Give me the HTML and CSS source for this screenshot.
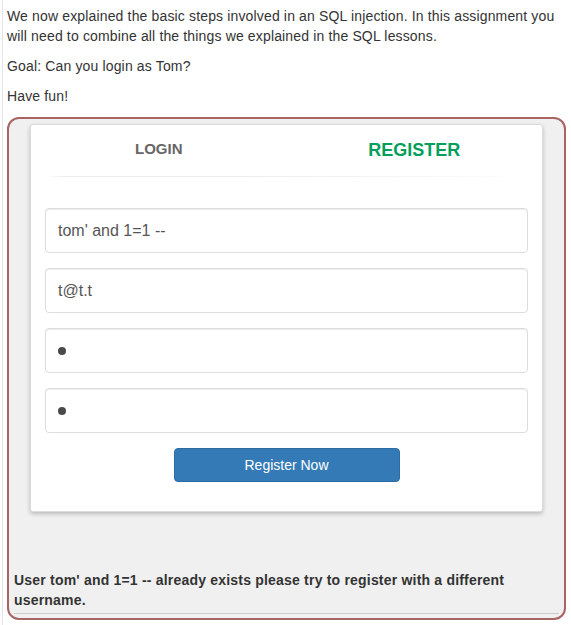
FILE: index.html
```html
<!DOCTYPE html>
<html>
<head>
<meta charset="utf-8">
<title>SQL Injection</title>
<link rel="stylesheet" href="styles.css">
</head>
<body>
<div class="page">
  <p>We now explained the basic steps involved in an SQL injection. In this assignment you will need to combine all the things we explained in the SQL lessons.</p>
  <p>Goal: Can you login as Tom?</p>
  <p>Have fun!</p>
  <div class="attack">
    <div class="card">
      <div class="tabs">
        <span class="tab tab-login">LOGIN</span>
        <span class="tab tab-register">REGISTER</span>
      </div>
      <div class="rule"></div>
      <div class="form">
        <div class="field">tom' and 1=1 --</div>
        <div class="field">t@t.t</div>
        <div class="field"><span class="dot"></span></div>
        <div class="field"><span class="dot"></span></div>
        <div class="actions"><button class="btn" type="button">Register Now</button></div>
      </div>
    </div>
    <div class="feedback">User tom' and 1=1 -- already exists please try to register with a different username.</div>
    <div class="output-line"></div>
  </div>
</div>
</body>
</html>
```
FILE: styles.css
```css
html, body {
  margin: 0;
  background: #fff;
}
body {
  font-family: "Liberation Sans", Arial, sans-serif;
  font-size: 14px;
  line-height: 20px;
  color: #333;
}
.page {
  margin-left: 2px;
  border-left: 1px solid #e4e4ec;
  padding: 6px 5px 0 4px;
  min-height: 619px;
}
p {
  margin: 0 0 10px;
  letter-spacing: 0.15px;
}
.attack {
  margin-top: 11px;
  border: 2px solid #a86363;
  border-radius: 12px;
  background: #f0f0f0;
  padding: 5px 5px 4px;
}
.card {
  margin: 0 16px;
  background: #fff;
  border: 1px solid #dcdcdc;
  border-radius: 3px;
  box-shadow: 0 2px 4px rgba(0, 0, 0, 0.22);
  padding-bottom: 29px;
}
.tabs {
  display: flex;
  align-items: flex-start;
  height: 51px;
  box-sizing: border-box;
  padding-top: 13px;
}
.tab {
  flex: 1;
  text-align: center;
  font-weight: bold;
  line-height: 1.42857;
}
.tab-login {
  font-size: 15px;
  color: #666;
}
.tab-register {
  font-size: 18px;
  color: #029f5b;
}
.rule {
  height: 1px;
  margin: 0 15px;
  background: linear-gradient(to right, rgba(0,0,0,0), rgba(0,0,0,0.07) 4%, rgba(0,0,0,0.07) 40%, rgba(0,0,0,0.04) 75%, rgba(0,0,0,0));
}
.form {
  display: flex;
  flex-direction: column;
  gap: 15px;
  padding: 31px 14px 0;
}
.field {
  height: 45px;
  box-sizing: border-box;
  display: flex;
  align-items: center;
  padding: 0 12px;
  border: 1px solid #ddd;
  border-radius: 4px;
  box-shadow: inset 0 1px 1px rgba(0, 0, 0, 0.075);
  font-size: 16px;
  color: #555;
}
.dot {
  width: 8px;
  height: 8px;
  border-radius: 50%;
  background: #4a4a4a;
}
.actions {
  display: flex;
  justify-content: center;
}
.btn {
  width: 226px;
  height: 34px;
  box-sizing: border-box;
  padding: 6px 12px;
  background: #337ab7;
  border: 1px solid #2e6da4;
  border-radius: 4px;
  color: #fff;
  font-family: "Liberation Sans", Arial, sans-serif;
  font-size: 14px;
  line-height: 20px;
}
.feedback {
  margin-top: 58px;
  font-weight: bold;
  letter-spacing: 0.2px;
}
.output-line {
  margin-top: 3px;
  border-top: 1px solid #ccc;
}
```
